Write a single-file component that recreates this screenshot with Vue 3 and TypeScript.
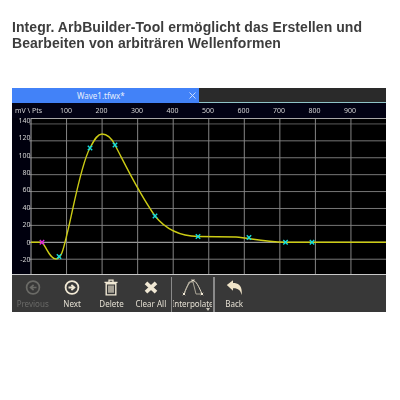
<script setup lang="ts">
const ox = 12
const oy = 118
const xTicks = [100, 200, 300, 400, 500, 600, 700, 800, 900]
const xOf = (v: number) => 31 + v * 0.3555 - ox
const yOf = (v: number) => 242.3 - v * 0.8455 - oy
const labelY = (v: number) => 242.3 - v * 0.871 - oy + 2.4
const yTicks = [140, 120, 100, 80, 60, 40, 20, 0, -20]
const curve = [
  'M19 124.3 L30 124.3',
  'C35 130 38 141 44 141',
  'C50 141 52 128 56 112',
  'C61 92 69 46 78 30',
  'C83 20 86 16 90 16',
  'C95 16 100 21 103 27',
  'C113 46 125 72 143 98',
  'C151 108 163 118 186 118.5',
  'L224 119',
  'C238 120 250 124 273.5 124.3',
  'L374 124.3'
].join(' ')
const markers = [
  { x: 30, y: 124.3 },
  { x: 47, y: 138.5 },
  { x: 78, y: 30 },
  { x: 103, y: 27 },
  { x: 143, y: 98 },
  { x: 186, y: 118.5 },
  { x: 237, y: 119.5 },
  { x: 273.5, y: 124.3 },
  { x: 300, y: 124.3 }
]
const mark = (m: { x: number; y: number }) =>
  `M${m.x - 2.2} ${m.y - 2.2} L${m.x + 2.2} ${m.y + 2.2} M${m.x + 2.2} ${m.y - 2.2} L${m.x - 2.2} ${m.y + 2.2}`
</script>

<template>
  <main class="page">
    <h1 class="title">Integr. ArbBuilder-Tool ermöglicht das Erstellen und<br />Bearbeiten von arbiträren Wellenformen</h1>
    <section class="screen">
      <div class="tabs">
        <div class="tab">
          <span class="tab-name">Wave1.tfwx*</span>
          <svg class="tab-close" width="7" height="7" viewBox="0 0 7 7">
            <path d="M0.5 0.5 L6.5 6.5 M6.5 0.5 L0.5 6.5" stroke="#d8e4fa" stroke-width="0.9" fill="none" />
          </svg>
        </div>
        <div class="tab-rest"></div>
      </div>
      <div class="axis-head">
        <span class="unit">mV \ Pts</span>
        <div class="ticks">
          <span v-for="t in xTicks" :key="t" class="tick">{{ t }}</span>
        </div>
      </div>
      <svg class="plot" width="374" height="157" viewBox="0 0 374 157">
        <rect width="374" height="157" fill="#000" />
        <rect width="19" height="157" fill="#00000e" />
        <g stroke-width="1" fill="none">
          <path v-for="v in yTicks" :key="'h' + v" :d="`M17 ${yOf(v)} H374`" :stroke="v === 0 ? '#c0c0c0' : v === 140 ? '#5a5a5a' : '#777'" />
          <path v-for="t in xTicks" :key="'v' + t" :d="`M${xOf(t)} 0 V157`" stroke="#858585" />
          <path d="M19 0.5 H374" stroke="#a8a8a8" />
          <path d="M19 0 V157" stroke="#a8a8a8" />
          <path d="M19 156.5 H374" stroke="#c8c8c8" />
        </g>
        <text v-for="v in yTicks" :key="'l' + v" class="ylabel" x="18.5" :y="labelY(v)" text-anchor="end">{{ v }}</text>
        <path :d="curve" fill="none" stroke="#cccc14" stroke-width="1.4" />
        <g fill="none" stroke-width="1.4">
          <path v-for="(m, i) in markers" :key="i" :d="mark(m)" :stroke="i === 0 ? '#e020e0' : '#14dcdc'" />
        </g>
      </svg>
      <div class="toolbar">
        <button class="tool disabled" type="button">
          <svg width="16" height="16" viewBox="0 0 16 16">
            <circle cx="8" cy="8" r="6.4" fill="none" stroke="#6a6a66" stroke-width="1.7" />
            <path d="M11.5 8 H6.5 M8.6 5.3 L5.6 8 L8.6 10.7" fill="none" stroke="#6a6a66" stroke-width="1.7" />
          </svg>
          <span>Previous</span>
        </button>
        <button class="tool" type="button">
          <svg width="16" height="16" viewBox="0 0 16 16">
            <circle cx="8" cy="8" r="6.4" fill="none" stroke="#f0e8d4" stroke-width="1.8" />
            <path d="M4.5 8 H9.5 M7.4 5.3 L10.4 8 L7.4 10.7" fill="none" stroke="#f0e8d4" stroke-width="1.8" />
          </svg>
          <span>Next</span>
        </button>
        <button class="tool" type="button">
          <svg width="16" height="17" viewBox="0 0 16 17">
            <path d="M1.5 3.4 H14.5 M6 3 V1.2 H10 V3" fill="none" stroke="#f0e8d4" stroke-width="1.3" />
            <path d="M3.2 4.8 H12.8 V15.9 H3.2 Z" fill="none" stroke="#f0e8d4" stroke-width="1.4" />
            <path d="M6 6.5 V13.8 M8 6.5 V13.8 M10 6.5 V13.8" fill="none" stroke="#f0e8d4" stroke-width="1.2" />
          </svg>
          <span>Delete</span>
        </button>
        <button class="tool" type="button">
          <svg width="16" height="16" viewBox="0 0 16 16">
            <path d="M3 3.4 L13 12.6 M13 3.4 L3 12.6" fill="none" stroke="#f0e8d4" stroke-width="3.8" />
          </svg>
          <span>Clear All</span>
        </button>
        <i class="sep"></i>
        <button class="tool interp" type="button">
          <svg width="22" height="17" viewBox="0 0 22 17">
            <path d="M2 15 C5 7 8 1.5 11 1.5 C14 1.5 17 8 20 15" fill="none" stroke="#e4dcc8" stroke-width="1" />
            <path d="M2 15 L7 3 H11 L14 15 H20" fill="none" stroke="#b8b2a2" stroke-width="0.9" />
            <path d="M0.8 13.8 L3.2 16.2 M3.2 13.8 L0.8 16.2 M9.8 0.3 L12.2 2.7 M12.2 0.3 L9.8 2.7 M18.8 13.8 L21.2 16.2 M21.2 13.8 L18.8 16.2" fill="none" stroke="#f0e8d4" stroke-width="1" />
          </svg>
          <span class="clip"><span>Interpolate</span></span>
          <i class="caret"></i>
        </button>
        <i class="sep"></i>
        <button class="tool" type="button">
          <svg width="17" height="16" viewBox="0 0 17 16">
            <path d="M0.8 5.6 L7 0.8 V3.6 C12 3.6 15.8 5.8 15.8 12.8 C15.8 13.8 15.6 14.8 15.4 15.4 C14.8 10.8 12 8.6 7 8.8 V11.2 Z" fill="#f0e4c8" />
          </svg>
          <span>Back</span>
        </button>
      </div>
    </section>
  </main>
</template>

<style scoped>
.page {
  width: 400px;
  height: 400px;
  padding-top: 19px;
  box-sizing: border-box;
  background: #fff;
  overflow: hidden;
}
.title {
  margin: 0 0 37px 12px;
  font: bold 14px/16px "Liberation Sans", Arial, sans-serif;
  letter-spacing: 0.06px;
  color: #3d3d3d;
  white-space: nowrap;
  filter: blur(0.25px);
}
.screen {
  width: 374px;
  margin-left: 12px;
  font-family: "Noto Sans", "Open Sans", sans-serif;
  filter: blur(0.35px);
}
.tabs {
  display: flex;
  height: 15px;
}
.tab {
  position: relative;
  width: 187px;
  background: #4282f8;
  display: flex;
  align-items: center;
}
.tab-name {
  margin-left: 65px;
  font-size: 8px;
  color: #e6eefc;
}
.tab-close {
  position: absolute;
  right: 3px;
  top: 4px;
}
.tab-rest {
  flex: 1;
  background: #2a2a2a;
  border-bottom: 1px solid #8fc4c8;
  box-sizing: border-box;
}
.axis-head {
  display: flex;
  height: 15px;
  align-items: center;
  background: #020214;
  color: #d4d4d4;
  font-size: 7px;
}
.unit {
  width: 19px;
  margin-left: 3px;
  white-space: nowrap;
}
.ticks {
  display: flex;
  margin-left: 14.25px;
}
.tick {
  width: 35.5px;
  text-align: center;
}
.plot {
  display: block;
  overflow: visible;
}
.ylabel {
  font-size: 7px;
  fill: #d4d4d4;
}
.toolbar {
  display: flex;
  height: 38px;
  background: #383838;
  border-top: 1px solid #c8c8c8;
  box-sizing: border-box;
  padding-left: 1px;
  margin-top: -1px;
  position: relative;
}
.tool {
  position: relative;
  width: 39.4px;
  padding: 4px 0 0;
  margin: 0;
  border: 0;
  background: none;
  display: flex;
  flex-direction: column;
  align-items: center;
  gap: 2.5px;
  color: #e4dfd2;
  font: 8px/10px "Noto Sans", "Open Sans", sans-serif;
  white-space: nowrap;
}
.tool svg {
  height: 17px;
  flex: none;
}
.disabled {
  color: #6a6a68;
}
.sep {
  width: 1.5px;
  height: 35px;
  margin-top: 1.5px;
  background: #8a8a8a;
  flex: none;
}
.interp {
  width: 41px;
}
.clip {
  display: block;
  width: 39px;
  overflow: hidden;
  text-align: center;
}
.clip span {
  display: inline-block;
  margin: 0 -5px;
}
.caret {
  position: absolute;
  right: 3px;
  bottom: 1px;
  width: 0;
  height: 0;
  border-left: 2px solid transparent;
  border-right: 2px solid transparent;
  border-top: 3px solid #c8c4b8;
}
</style>
